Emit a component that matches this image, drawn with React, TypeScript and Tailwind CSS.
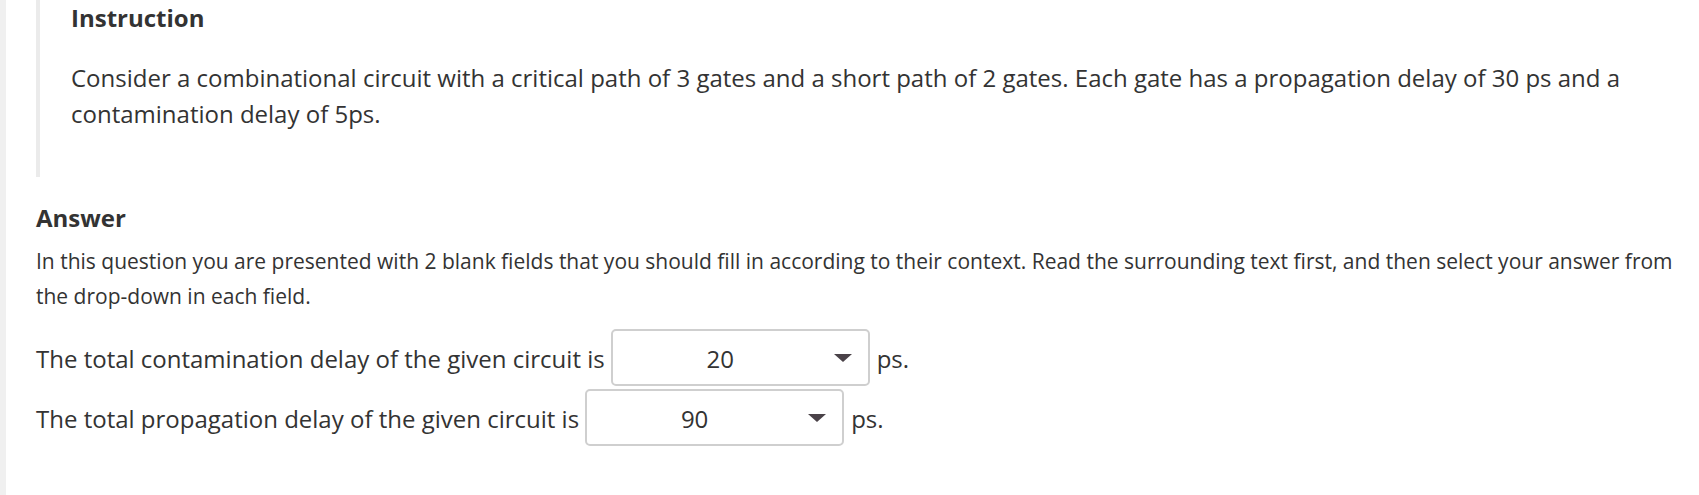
import React from "react";

function Caret() {
  return (
    <svg width="18" height="8" viewBox="0 0 18 8" className="absolute right-[16px] top-1/2 -translate-y-1/2">
      <polygon points="0,0 18,0 9,8" fill="#4a4248" />
    </svg>
  );
}

function Select({ value }: { value: string }) {
  return (
    <div className="relative h-[57px] w-[259px] shrink-0 rounded-[5px] border-2 border-[#cfcfcf] bg-white">
      <div className="flex h-full items-center justify-center pr-[40px] pt-[2px] text-[24px] text-[#333]">
        {value}
      </div>
      <Caret />
    </div>
  );
}

function Row({ label, value }: { label: string; value: string }) {
  return (
    <div className="flex h-[57px] items-center">
      <span className="pt-[2px] text-[24px] text-[#333]">{label}</span>
      <div className="ml-[6px]">
        <Select value={value} />
      </div>
      <span className="ml-[7px] pt-[2px] text-[24px] text-[#333]">ps.</span>
    </div>
  );
}

export default function App() {
  return (
    <div
      className="flex min-h-[495px] bg-white text-[#333]"
      style={{ fontFamily: '"Open Sans", "Noto Sans", sans-serif' }}
    >
      <div className="w-[6px] shrink-0 bg-[#f0f0f0]" />
      <div className="flex-1 pl-[30px] pr-[20px]">
        <div className="border-l-4 border-[#ebebeb] pb-[45px] pl-[31px] pt-[4px]">
          <h2 className="text-[24px] font-bold leading-[28px] text-[#333]">Instruction</h2>
          <p className="mt-[28px] text-[24px] leading-[36px]">
            Consider a combinational circuit with a critical path of 3 gates and a short path of 2 gates. Each gate has a propagation delay of 30 ps and a contamination delay of 5ps.
          </p>
        </div>
        <h2 className="mt-[27px] text-[24px] font-bold leading-[28px] text-[#333]">Answer</h2>
        <p className="mt-[12px] text-[21px] leading-[35px]">
          In this question you are presented with 2 blank fields that you should fill in according to their context. Read the surrounding text first, and then select your answer from the drop-down in each field.
        </p>
        <div className="mt-[15px] flex flex-col gap-[3px]">
          <Row label="The total contamination delay of the given circuit is" value="20" />
          <Row label="The total propagation delay of the given circuit is" value="90" />
        </div>
      </div>
    </div>
  );
}
